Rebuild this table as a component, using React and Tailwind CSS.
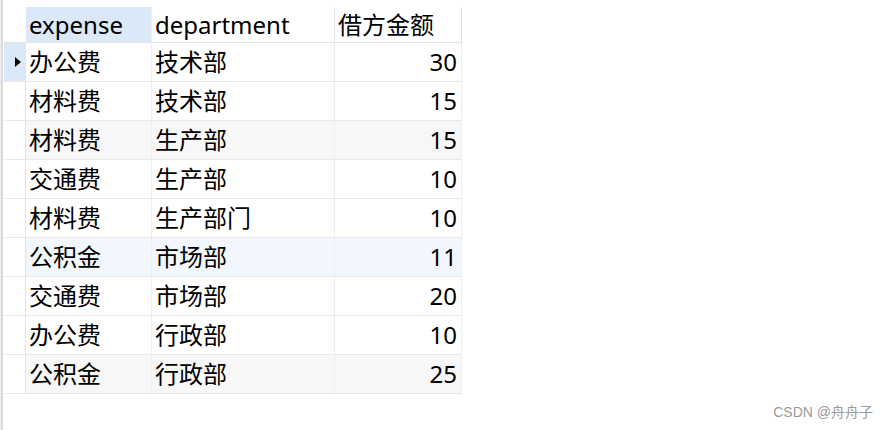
import React from "react";

const rows = [
  { e: "办公费", d: "技术部", a: 30, sel: true },
  { e: "材料费", d: "技术部", a: 15 },
  { e: "材料费", d: "生产部", a: 15, gray: true },
  { e: "交通费", d: "生产部", a: 10 },
  { e: "材料费", d: "生产部门", a: 10 },
  { e: "公积金", d: "市场部", a: 11, hover: true },
  { e: "交通费", d: "市场部", a: 20 },
  { e: "办公费", d: "行政部", a: 10 },
  { e: "公积金", d: "行政部", a: 25, gray: true },
];

const font = { fontFamily: '"Noto Sans", "Noto Sans CJK SC", sans-serif' };

export default function App() {
  return (
    <div className="w-[889px] h-[430px] bg-white relative flex text-black" style={font}>
      <div className="w-[1px] h-full bg-[#f0f0f0]" />
      <div className="w-[2px] h-full bg-[#dadada]" />
      <div className="pl-[1px] pt-[7px]">
        <div className="flex h-[36px] border-b border-[#e3e3e3]">
          <div className="w-[22px]" />
          <div className="w-[126px] bg-[#dae8f7] border-r border-[#eeeeee] flex items-center pl-[3px] pt-[1px] text-[24px] leading-none">expense</div>
          <div className="w-[183px] border-r border-[#e3e3e3] flex items-center pl-[3px] pt-[1px] text-[24px] leading-none">department</div>
          <div className="w-[127px] border-r border-[#e3e3e3] flex items-center pl-[3px] pt-[1px] text-[24px] leading-none">借方金额</div>
        </div>
        {rows.map((r, i) => {
          const bg = r.hover ? "bg-[#f1f7fd]" : r.gray ? "bg-[#f7f7f7]" : "bg-white";
          return (
            <div key={i} className="flex h-[39px] border-b border-[#e8e8e8]">
              <div className={`w-[22px] border-r border-[#e3e3e3] flex items-center ${r.sel ? "bg-[#dae8f7]" : "bg-white"}`}>
                {r.sel && (
                  <svg width="6" height="10" viewBox="0 0 6 10" className="ml-[11px]">
                    <path d="M0 0 L6 5 L0 10 Z" fill="#000" />
                  </svg>
                )}
              </div>
              <div className={`w-[126px] border-r border-[#eeeeee] flex items-center pl-[3px] pb-[1px] text-[24px] leading-none ${bg}`}>{r.e}</div>
              <div className={`w-[183px] border-r border-[#eeeeee] flex items-center pl-[3px] pb-[1px] text-[24px] leading-none ${bg}`}>{r.d}</div>
              <div className={`w-[127px] border-r border-[#eeeeee] flex items-center justify-end pr-[4px] pb-[1px] text-[24px] leading-none ${bg}`}>{r.a}</div>
            </div>
          );
        })}
      </div>
      <div className="absolute right-[16px] bottom-[11px] text-[14px] text-[#9a9a9a] leading-none" style={{ fontFamily: '"Liberation Sans", "Noto Sans CJK SC", sans-serif' }}>
        CSDN @舟舟子
      </div>
    </div>
  );
}
